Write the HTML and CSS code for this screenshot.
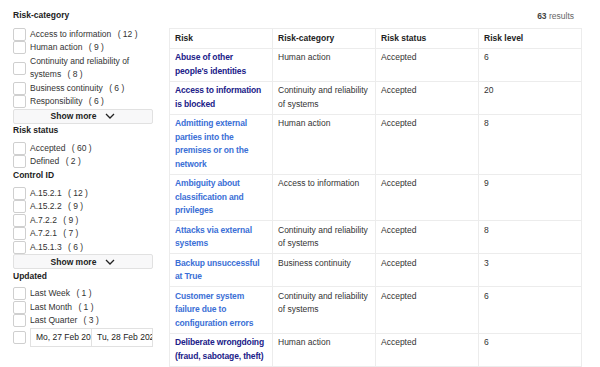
FILE: index.html
```html
<!DOCTYPE html>
<html lang="en">
<head>
    <meta charset="UTF-8">
    <meta name="viewport" content="width=device-width, initial-scale=1.0">
    <title>Risks</title>
    <link rel="stylesheet" href="styles.css">
</head>
<body>
    <div class="page">
        <aside class="filters">
            <h3 class="filter-title first">Risk-category</h3>
            <label class="check"><span class="box"></span><span>Access to information <span class="count">( 12 )</span></span></label>
            <label class="check"><span class="box"></span><span>Human action <span class="count">( 9 )</span></span></label>
            <label class="check"><span class="box"></span><span>Continuity and reliability of systems <span class="count">( 8 )</span></span></label>
            <label class="check"><span class="box"></span><span>Business continuity <span class="count">( 6 )</span></span></label>
            <label class="check"><span class="box"></span><span>Responsibility <span class="count">( 6 )</span></span></label>
            <button class="show-more">Show more
                <svg width="10" height="6" viewBox="0 0 10 6"><path d="M1 1l4 4 4-4" fill="none" stroke="#222" stroke-width="1.3"/></svg>
            </button>

            <h3 class="filter-title">Risk status</h3>
            <label class="check"><span class="box"></span><span>Accepted <span class="count">( 60 )</span></span></label>
            <label class="check"><span class="box"></span><span>Defined <span class="count">( 2 )</span></span></label>

            <h3 class="filter-title">Control ID</h3>
            <label class="check"><span class="box"></span><span>A.15.2.1 <span class="count">( 12 )</span></span></label>
            <label class="check"><span class="box"></span><span>A.15.2.2 <span class="count">( 9 )</span></span></label>
            <label class="check"><span class="box"></span><span>A.7.2.2 <span class="count">( 9 )</span></span></label>
            <label class="check"><span class="box"></span><span>A.7.2.1 <span class="count">( 7 )</span></span></label>
            <label class="check"><span class="box"></span><span>A.15.1.3 <span class="count">( 6 )</span></span></label>
            <button class="show-more">Show more
                <svg width="10" height="6" viewBox="0 0 10 6"><path d="M1 1l4 4 4-4" fill="none" stroke="#222" stroke-width="1.3"/></svg>
            </button>

            <h3 class="filter-title">Updated</h3>
            <label class="check"><span class="box"></span><span>Last Week <span class="count">( 1 )</span></span></label>
            <label class="check"><span class="box"></span><span>Last Month <span class="count">( 1 )</span></span></label>
            <label class="check"><span class="box"></span><span>Last Quarter <span class="count">( 3 )</span></span></label>
            <div class="check date-row">
                <span class="box"></span>
                <div class="dates">
                    <span class="date">Mo, 27 Feb 2023</span>
                    <span class="date">Tu, 28 Feb 2023</span>
                </div>
            </div>
        </aside>

        <main class="results">
            <div class="result-count"><b>63</b> results</div>
            <table class="risk-table">
                <thead>
                    <tr><th>Risk</th><th>Risk-category</th><th>Risk status</th><th>Risk level</th></tr>
                </thead>
                <tbody>
                    <tr><td><a class="visited" href="#">Abuse of other people's identities</a></td><td>Human action</td><td>Accepted</td><td>6</td></tr>
                    <tr><td><a class="visited" href="#">Access to information is blocked</a></td><td>Continuity and reliability of systems</td><td>Accepted</td><td>20</td></tr>
                    <tr><td><a href="#">Admitting external parties into the premises or on the network</a></td><td>Human action</td><td>Accepted</td><td>8</td></tr>
                    <tr><td><a href="#">Ambiguity about classification and privileges</a></td><td>Access to information</td><td>Accepted</td><td>9</td></tr>
                    <tr><td><a href="#">Attacks via external systems</a></td><td>Continuity and reliability of systems</td><td>Accepted</td><td>8</td></tr>
                    <tr><td><a href="#">Backup unsuccessful at True</a></td><td>Business continuity</td><td>Accepted</td><td>3</td></tr>
                    <tr><td><a href="#">Customer system failure due to configuration errors</a></td><td>Continuity and reliability of systems</td><td>Accepted</td><td>6</td></tr>
                    <tr><td><a class="visited" href="#">Deliberate wrongdoing (fraud, sabotage, theft)</a></td><td>Human action</td><td>Accepted</td><td>6</td></tr>
                </tbody>
            </table>
        </main>
    </div>
</body>
</html>
```

FILE: styles.css
```css
body {
    margin: 0;
    font-family: "Liberation Sans", Arial, sans-serif;
    font-size: 8.5px;
    color: #333;
    background-color: #fff;
}

.page {
    display: flex;
    gap: 16px;
    padding: 0 18px 0 13px;
}

.filters {
    width: 140px;
    flex-shrink: 0;
    display: flex;
    flex-direction: column;
}

.filter-title {
    margin: 0.5px 0 4.5px;
    font-size: 8.5px;
    line-height: 13px;
    font-weight: bold;
    color: #222;
}

.filter-title.first {
    margin-top: 8.5px;
    margin-bottom: 6px;
}

.check {
    display: flex;
    align-items: center;
    line-height: 13.5px;
    color: #333;
}

.box {
    width: 11px;
    height: 11px;
    flex-shrink: 0;
    border: 1px solid #cfcfcf;
    border-radius: 2px;
    background-color: #fff;
    margin-right: 4px;
}

.count {
    margin-left: 4px;
}

.show-more {
    display: flex;
    align-items: center;
    justify-content: center;
    gap: 9px;
    height: 15px;
    width: 140px;
    padding: 0;
    margin: 0;
    border: 1px solid #e1e1e1;
    border-radius: 2px;
    background-color: #f8f8f9;
    font-family: inherit;
    font-size: 8.5px;
    font-weight: bold;
    color: #222;
}

.date-row {
    margin-top: 0;
}

.dates {
    display: flex;
    flex: 1;
    min-width: 0;
}

.date {
    flex: 1 1 0;
    min-width: 0;
    height: 17px;
    line-height: 17px;
    padding: 0 5px;
    border: 1px solid #e1e1e1;
    overflow: hidden;
    white-space: nowrap;
    color: #222;
}

.date + .date {
    border-left: none;
}

.results {
    flex: 1;
    padding-top: 10px;
}

.result-count {
    text-align: right;
    line-height: 13px;
    margin: 0 8px 5px 0;
    color: #666;
}

.result-count b {
    color: #444;
}

.risk-table {
    width: 100%;
    border-collapse: collapse;
    table-layout: fixed;
    border: 1px solid #ececec;
}

.risk-table th,
.risk-table td {
    border: 1px solid #ececec;
    text-align: left;
    vertical-align: top;
    padding: 2.5px 5px;
    line-height: 13.5px;
}

.risk-table th {
    color: #222;
    font-weight: bold;
}

.risk-table a {
    font-weight: bold;
    letter-spacing: -0.15px;
    color: #3b6fd6;
    text-decoration: none;
}

.risk-table a.visited {
    color: #202088;
}
```
